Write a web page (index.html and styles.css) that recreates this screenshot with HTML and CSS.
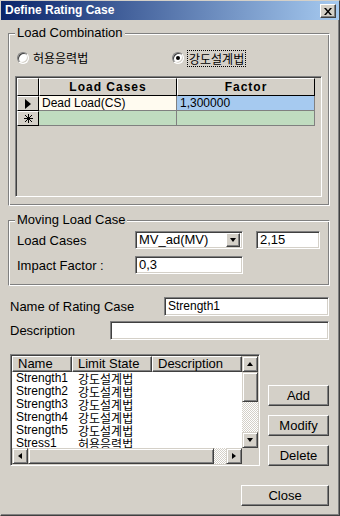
FILE: index.html
```html
<!DOCTYPE html>
<html lang="ko">
<head>
    <meta charset="UTF-8">
    <title>Define Rating Case</title>
    <link rel="stylesheet" href="styles.css">
</head>
<body>
<div class="window">
    <div class="titlebar">
        <span class="title">Define Rating Case</span>
        <span class="close-btn">
            <svg width="8" height="7" viewBox="0 0 8 7"><path d="M0 0h2l2 2.5L6 0h2L5 3.5 8 7H6L4 4.5 2 7H0l3-3.5z" fill="#000"/></svg>
        </span>
    </div>

    <div class="content">
        <!-- load combination -->
        <fieldset class="group group-combo">
            <legend>Load Combination</legend>
            <div class="radio-row">
                <label class="radio radio-first"><span class="radio-dot"></span><span class="ko">허용응력법</span></label>
                <label class="radio radio-on"><span class="radio-dot"></span><span class="ko focus">강도설계법</span></label>
            </div>
            <div class="grid">
                <div class="grid-row grid-head">
                    <div class="cell rowhead"></div>
                    <div class="cell head">Load Cases</div>
                    <div class="cell head">Factor</div>
                </div>
                <div class="grid-row">
                    <div class="cell rowhead">
                        <svg width="6" height="10" viewBox="0 0 6 10"><path d="M0 0l6 5-6 5z" fill="#000"/></svg>
                    </div>
                    <div class="cell data cream">Dead Load(CS)</div>
                    <div class="cell data blue">1,300000</div>
                </div>
                <div class="grid-row">
                    <div class="cell rowhead">
                        <svg width="9" height="9" viewBox="0 0 9 9"><path d="M4.5 0v9M0 4.5h9M1 1l7 7M8 1l-7 7" stroke="#000" stroke-width="1" fill="none"/></svg>
                    </div>
                    <div class="cell data green"></div>
                    <div class="cell data green"></div>
                </div>
            </div>
        </fieldset>

        <!-- moving load -->
        <fieldset class="group group-moving">
            <legend>Moving Load Case</legend>
            <div class="form-grid">
                <span class="label">Load Cases</span>
                <div class="combo">
                    <span class="combo-text">MV_ad(MV)</span>
                    <span class="combo-btn"></span>
                </div>
                <div class="field">2,15</div>
                <span class="label">Impact Factor :</span>
                <div class="field">0,3</div>
            </div>
        </fieldset>

        <div class="field-row name-row">
            <span class="label">Name of Rating Case</span>
            <div class="field name-field">Strength1</div>
        </div>
        <div class="field-row desc-row">
            <span class="label">Description</span>
            <div class="field desc-field"></div>
        </div>

        <div class="bottom">
            <div class="listview">
                <div class="lv-main">
                    <div class="lv-head">
                        <span class="lv-col c-name">Name</span>
                        <span class="lv-col c-state">Limit State</span>
                        <span class="lv-col c-desc">Description</span>
                    </div>
                    <div class="lv-rows">
                        <div class="lv-row"><span class="c-name">Strength1</span><span class="c-state ko">강도설계법</span></div>
                        <div class="lv-row"><span class="c-name">Strength2</span><span class="c-state ko">강도설계법</span></div>
                        <div class="lv-row"><span class="c-name">Strength3</span><span class="c-state ko">강도설계법</span></div>
                        <div class="lv-row"><span class="c-name">Strength4</span><span class="c-state ko">강도설계법</span></div>
                        <div class="lv-row"><span class="c-name">Strength5</span><span class="c-state ko">강도설계법</span></div>
                        <div class="lv-row"><span class="c-name">Stress1</span><span class="c-state ko">허용응력법</span></div>
                    </div>
                </div>
                <div class="vscroll">
                    <span class="sb-btn arrow-up"></span>
                    <span class="sb-thumb v-thumb"></span>
                    <span class="sb-track"></span>
                    <span class="sb-btn arrow-down"></span>
                </div>
                <div class="hscroll">
                    <span class="sb-btn arrow-left"></span>
                    <span class="sb-thumb h-thumb"></span>
                    <span class="sb-track"></span>
                    <span class="sb-btn arrow-right"></span>
                </div>
                <div class="sb-corner"></div>
            </div>
            <div class="buttons">
                <button class="btn">Add</button>
                <button class="btn">Modify</button>
                <button class="btn">Delete</button>
            </div>
        </div>

        <div class="close-row">
            <button class="btn btn-close">Close</button>
        </div>
    </div>
</div>
</body>
</html>
```

FILE: styles.css
```css
* {
    box-sizing: border-box;
}

body {
    margin: 0;
    background: #d4d0c8;
    font-family: "Liberation Sans", "Noto Sans CJK KR", sans-serif;
    font-size: 13px;
    color: #000;
}

.ko {
    font-family: "Noto Sans CJK KR", sans-serif;
    font-size: 12px;
}

/* window frame */
.window {
    width: 340px;
    height: 516px;
    background: #d4d0c8;
    border: 1px solid;
    border-color: #d4d0c8 #404040 #404040 #d4d0c8;
    box-shadow: inset -1px -1px 0 #808080;
}

.titlebar {
    display: flex;
    height: 19px;
    background: linear-gradient(to right, #0a246a, #a6caf0);
}

.title {
    flex: 1;
    color: #fff;
    font-weight: bold;
    font-size: 12px;
    line-height: 19px;
    padding-left: 4px;
}

.close-btn {
    width: 16px;
    height: 14px;
    margin: 3px 3px 0 0;
    background: #d4d0c8;
    border: 1px solid;
    border-color: #fff #404040 #404040 #fff;
    box-shadow: inset -1px -1px 0 #808080;
    display: flex;
    align-items: center;
    justify-content: center;
}

.content {
    padding: 6px 9px 0 7px;
}

/* group boxes, etched look */
.group {
    margin: 0;
    min-width: 0;
    padding: 0 7px 8px 6px;
    border: 1px solid;
    border-color: #808080 #fff #fff #808080;
    box-shadow: inset 1px 1px 0 #fff, inset -1px -1px 0 #808080;
}

.group legend {
    padding: 0 2px;
    font-size: 13px;
    line-height: 14px;
    background: #d4d0c8;
}

.radio-row {
    display: flex;
    align-items: center;
    height: 16px;
    margin-top: 10px;
}

.radio {
    display: flex;
    align-items: center;
    gap: 4px;
    line-height: 14px;
}

.radio-first {
    width: 155px;
    margin-left: 2px;
}

.radio-dot {
    width: 12px;
    height: 12px;
    border-radius: 50%;
    background: #fff;
    border: 1px solid;
    border-color: #808080 #fff #fff #808080;
    box-shadow: inset 1px 1px 0 #404040, inset -1px -1px 0 #d4d0c8;
    display: flex;
    align-items: center;
    justify-content: center;
}

.radio-on .radio-dot::after {
    content: "";
    width: 4px;
    height: 4px;
    border-radius: 50%;
    background: #000;
}

.focus {
    outline: 1px dotted #000;
    padding: 0 1px;
    line-height: 15px;
}

/* spreadsheet grid */
.grid {
    margin-top: 10px;
    height: 121px;
    padding: 1px;
    border: 1px solid;
    border-color: #808080 #fff #fff #808080;
    box-shadow: inset 1px 1px 0 #404040;
    background: #d4d0c8;
}

.grid-row {
    display: grid;
    grid-template-columns: 22px 138px 138px;
    height: 15px;
}

.grid-head {
    height: 18px;
}

.cell {
    overflow: hidden;
    white-space: nowrap;
    font-size: 12px;
    line-height: 14px;
}

.rowhead, .head {
    background: #d4d0c8;
    border: 1px solid;
    border-color: #fff #000 #000 #fff;
    display: flex;
    align-items: center;
    justify-content: center;
}

.head {
    font-weight: bold;
    letter-spacing: 1px;
}

.data {
    border-right: 1px solid #808080;
    border-bottom: 1px solid #808080;
    padding-left: 3px;
}

.cream { background: #fffbf0; }
.blue { background: #a6caf0; }
.green { background: #c0dcc0; }

/* moving load */
.group-moving {
    margin-top: 7px;
    padding-bottom: 11px;
}

.form-grid {
    display: grid;
    grid-template-columns: 105px 108px 64px;
    grid-auto-rows: 18px;
    column-gap: 13px;
    row-gap: 7px;
    margin: 4px 0 0 2px;
    align-items: center;
}

.combo {
    display: flex;
    align-items: center;
    height: 18px;
    padding: 1px 2px;
    background: #fff;
    border: 1px solid;
    border-color: #808080 #fff #fff #808080;
    box-shadow: inset 1px 1px 0 #404040, inset -1px -1px 0 #d4d0c8;
}

.combo-text {
    flex: 1;
    padding-left: 1px;
    line-height: 14px;
}

.combo-btn {
    width: 14px;
    height: 14px;
    background: #d4d0c8;
    border: 1px solid;
    border-color: #fff #404040 #404040 #fff;
    box-shadow: inset -1px -1px 0 #808080;
    display: flex;
    align-items: center;
    justify-content: center;
}

.combo-btn::after {
    content: "";
    border-left: 3.5px solid transparent;
    border-right: 3.5px solid transparent;
    border-top: 4px solid #000;
}

.field {
    height: 18px;
    padding: 0 3px;
    background: #fff;
    border: 1px solid;
    border-color: #808080 #fff #fff #808080;
    box-shadow: inset 1px 1px 0 #404040, inset -1px -1px 0 #d4d0c8;
    line-height: 16px;
    white-space: nowrap;
}

/* name / description */
.field-row {
    display: flex;
    align-items: center;
    justify-content: space-between;
    margin: 0 1px 0 2px;
}

.name-row {
    margin-top: 11px;
}

.desc-row {
    margin-top: 5px;
}

.name-row .field, .desc-row .field {
    height: 19px;
    line-height: 17px;
    font-size: 12px;
}

.name-field { width: 165px; }
.desc-field { width: 219px; }

/* list view */
.bottom {
    display: flex;
    margin: 14px 1px 0 2px;
}

.listview {
    display: grid;
    grid-template-columns: 230px 16px;
    grid-template-rows: 92px 16px;
    width: 250px;
    height: 112px;
    border: 1px solid;
    border-color: #808080 #fff #fff #808080;
    box-shadow: inset 1px 1px 0 #404040, inset -1px -1px 0 #d4d0c8;
    padding: 1px;
    background: #fff;
}

.lv-main {
    overflow: hidden;
}

.lv-head {
    display: flex;
    height: 16px;
}

.lv-col {
    height: 16px;
    background: #d4d0c8;
    border: 1px solid;
    border-color: #fff #404040 #404040 #fff;
    box-shadow: inset -1px -1px 0 #808080;
    padding-left: 5px;
    line-height: 14px;
    white-space: nowrap;
    overflow: hidden;
}

.lv-col.c-name { width: 60px; }
.lv-col.c-state { width: 80px; }
.lv-col.c-desc { width: 90px; }

.lv-row {
    display: flex;
    height: 13px;
    line-height: 13px;
    font-size: 12px;
    white-space: nowrap;
}

.lv-row .c-name {
    width: 60px;
    padding-left: 4px;
}

.lv-row .c-state {
    padding-left: 6px;
    line-height: 13px;
}

.vscroll, .hscroll {
    display: flex;
    background: #d4d0c8;
}

.vscroll {
    flex-direction: column;
}

.sb-btn, .sb-thumb {
    flex: none;
    background: #d4d0c8;
    border: 1px solid;
    border-color: #d4d0c8 #404040 #404040 #d4d0c8;
    box-shadow: inset 1px 1px 0 #fff, inset -1px -1px 0 #808080;
    display: flex;
    align-items: center;
    justify-content: center;
}

.sb-btn {
    width: 16px;
    height: 16px;
}

.v-thumb { height: 30px; }
.h-thumb { width: 186px; }

.sb-track {
    flex: 1;
    background: repeating-conic-gradient(#fff 0 25%, #d4d0c8 0 50%) 0 0 / 2px 2px;
}

.arrow-up::after {
    content: "";
    border-left: 3.5px solid transparent;
    border-right: 3.5px solid transparent;
    border-bottom: 4px solid #000;
}

.arrow-down::after {
    content: "";
    border-left: 3.5px solid transparent;
    border-right: 3.5px solid transparent;
    border-top: 4px solid #000;
}

.arrow-left::after {
    content: "";
    border-top: 3.5px solid transparent;
    border-bottom: 3.5px solid transparent;
    border-right: 4px solid #000;
}

.arrow-right::after {
    content: "";
    border-top: 3.5px solid transparent;
    border-bottom: 3.5px solid transparent;
    border-left: 4px solid #000;
}

.sb-corner {
    background: #d4d0c8;
}

/* buttons */
.buttons {
    display: flex;
    flex-direction: column;
    gap: 9px;
    margin-left: auto;
    padding-top: 31px;
}

.btn {
    width: 61px;
    height: 21px;
    padding: 0;
    font-family: "Liberation Sans", sans-serif;
    font-size: 13px;
    color: #000;
    background: #d4d0c8;
    border: 1px solid;
    border-color: #fff #404040 #404040 #fff;
    box-shadow: inset -1px -1px 0 #808080;
}

.close-row {
    display: flex;
    justify-content: flex-end;
    margin: 19px 1px 0 0;
}

.btn-close {
    width: 88px;
}
```
